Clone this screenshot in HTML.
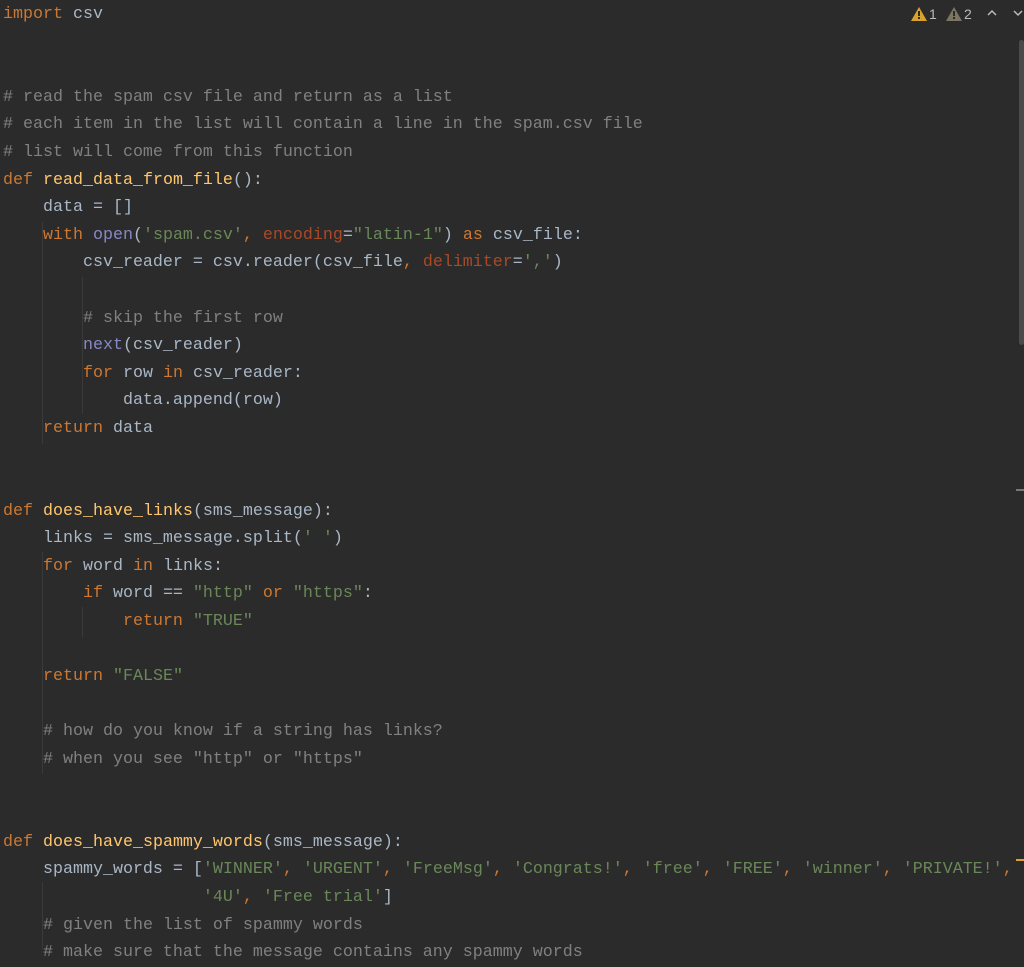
<!DOCTYPE html>
<html><head><meta charset="utf-8"><style>
html,body{margin:0;padding:0;background:#2b2b2b;width:1024px;height:947px;overflow:hidden}
#ed{position:absolute;left:3px;top:1px;font-family:"Liberation Mono",monospace;font-size:16.67px;line-height:27.6px;color:#a9b7c6;white-space:pre}
.k{color:#cc7832}.f{color:#ffc66d}.s{color:#6a8759}.c{color:#808080}.b{color:#8888c6}.p{color:#aa4926}
.g{position:absolute;width:1px;background:#3a3a3a}
.sb{position:absolute;left:1019px;top:40px;width:5px;height:305px;background:#4a4a4a;border-radius:3px}
.top{position:absolute;top:6px;font-family:"Liberation Sans",sans-serif;font-size:14px;color:#bbb}
</style></head><body>
<div class="g" style="left:42px;top:222px;height:222px"></div>
<div class="g" style="left:82px;top:277px;height:137px"></div>
<div class="g" style="left:42px;top:552px;height:222px"></div>
<div class="g" style="left:82px;top:607px;height:30px"></div>
<div class="g" style="left:42px;top:882px;height:67px"></div>
<div class="sb"></div>
<div style="position:absolute;left:1016px;top:489px;width:8px;height:2px;background:#777"></div>
<div style="position:absolute;left:1016px;top:859px;width:8px;height:2px;background:#d9a22a"></div>
<svg style="position:absolute;left:911px;top:7px" width="16" height="14" viewBox="0 0 16 14"><path d="M8 0L16 14H0Z" fill="#d9a22a"/><rect x="7" y="4" width="2" height="5" fill="#2b2b2b"/><rect x="7" y="10" width="2" height="2" fill="#2b2b2b"/></svg>
<div class="top" style="left:929px">1</div>
<svg style="position:absolute;left:946px;top:7px" width="16" height="14" viewBox="0 0 16 14"><path d="M8 0L16 14H0Z" fill="#7b7561"/><rect x="7" y="4" width="2" height="5" fill="#2b2b2b"/><rect x="7" y="10" width="2" height="2" fill="#2b2b2b"/></svg>
<div class="top" style="left:964px">2</div>
<svg style="position:absolute;left:986px;top:9px" width="12" height="8"><path d="M2 6L6 2L10 6" stroke="#bbb" stroke-width="1.5" fill="none"/></svg>
<svg style="position:absolute;left:1012px;top:9px" width="12" height="8"><path d="M2 2L6 6L10 2" stroke="#bbb" stroke-width="1.5" fill="none"/></svg>
<div id="ed"><span class="k">import</span> csv


<span class="c"># read the spam csv file and return as a list</span>
<span class="c"># each item in the list will contain a line in the spam.csv file</span>
<span class="c"># list will come from this function</span>
<span class="k">def</span> <span class="f">read_data_from_file</span>():
    data = []
    <span class="k">with</span> <span class="b">open</span>(<span class="s">'spam.csv'</span><span class="k">,</span> <span class="p">encoding</span>=<span class="s">"latin-1"</span>) <span class="k">as</span> csv_file:
        csv_reader = csv.reader(csv_file<span class="k">,</span> <span class="p">delimiter</span>=<span class="s">','</span>)

        <span class="c"># skip the first row</span>
        <span class="b">next</span>(csv_reader)
        <span class="k">for</span> row <span class="k">in</span> csv_reader:
            data.append(row)
    <span class="k">return</span> data


<span class="k">def</span> <span class="f">does_have_links</span>(sms_message):
    links = sms_message.split(<span class="s">' '</span>)
    <span class="k">for</span> word <span class="k">in</span> links:
        <span class="k">if</span> word == <span class="s">"http"</span> <span class="k">or</span> <span class="s">"https"</span>:
            <span class="k">return</span> <span class="s">"TRUE"</span>

    <span class="k">return</span> <span class="s">"FALSE"</span>

    <span class="c"># how do you know if a string has links?</span>
    <span class="c"># when you see "http" or "https"</span>


<span class="k">def</span> <span class="f">does_have_spammy_words</span>(sms_message):
    spammy_words = [<span class="s">'WINNER'</span><span class="k">,</span> <span class="s">'URGENT'</span><span class="k">,</span> <span class="s">'FreeMsg'</span><span class="k">,</span> <span class="s">'Congrats!'</span><span class="k">,</span> <span class="s">'free'</span><span class="k">,</span> <span class="s">'FREE'</span><span class="k">,</span> <span class="s">'winner'</span><span class="k">,</span> <span class="s">'PRIVATE!'</span><span class="k">,</span>
                    <span class="s">'4U'</span><span class="k">,</span> <span class="s">'Free trial'</span>]
    <span class="c"># given the list of spammy words</span>
    <span class="c"># make sure that the message contains any spammy words</span>
</div>
</body></html>
